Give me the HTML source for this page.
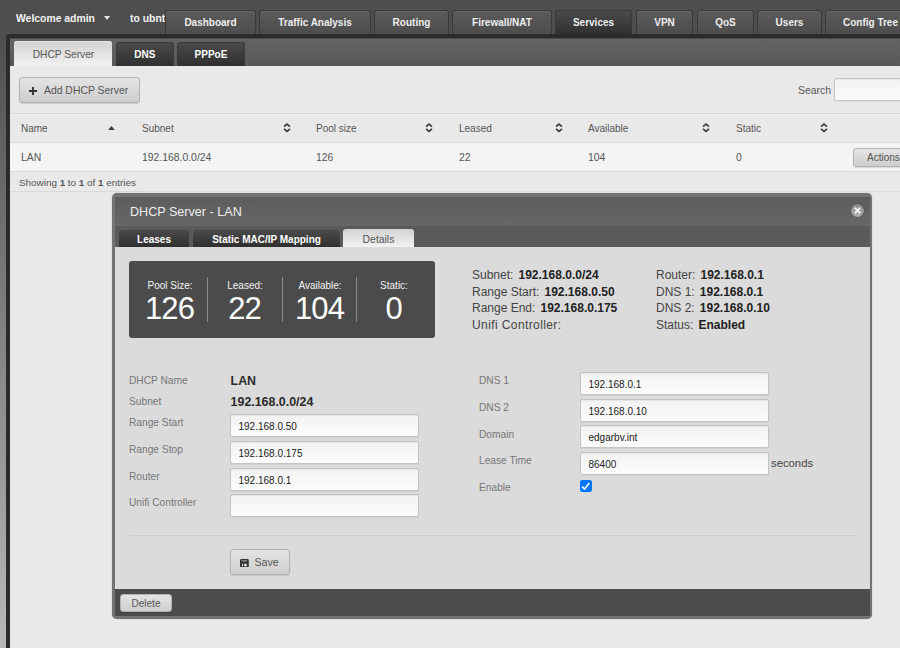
<!DOCTYPE html>
<html><head><meta charset="utf-8">
<style>
*{box-sizing:border-box;margin:0;padding:0}
html,body{width:900px;height:648px;overflow:hidden}
body{background:linear-gradient(#4e4e4e 0px,#4e4e4e 30px,#b8b8b8 648px);font-family:"Liberation Sans",sans-serif;position:relative;color:#555}
.a{position:absolute;white-space:nowrap}
/* header */
#welcome{left:16px;top:12px;font-size:10.4px;font-weight:bold;color:#f2f2f2;line-height:14px}
#caret{left:103.7px;top:16.4px;width:0;height:0;border-left:3.4px solid transparent;border-right:3.4px solid transparent;border-top:4.2px solid #e6e6e6}
#tou{left:130px;top:12px;font-size:10.4px;font-weight:bold;color:#f2f2f2;line-height:14px}
.nt{top:10px;height:25px;border:1px solid #3a3a3a;border-bottom:none;border-radius:3px 3px 0 0;background:linear-gradient(#5b5b5b,#4c4c4c);color:#eee;font-weight:bold;font-size:10px;text-align:center;line-height:23px;box-shadow:inset 0 1px 0 #666}
.nt.act{background:linear-gradient(#4a4a4a,#2f2f2f);box-shadow:none}
/* main frame */
#frame{left:6px;top:34px;width:900px;height:620px;background:#2b2b2b;border-radius:4px 0 0 0}
#tabbar{left:10px;top:38px;width:890px;height:28px;background:linear-gradient(#636363,#595959);border-top:1px solid #4a4a4a;box-shadow:inset 0 1px 0 #666}
.st{top:42px;height:24px;border-radius:3px 3px 0 0;text-align:center;font-size:10.4px;line-height:26px}
.st.on{background:linear-gradient(#d2d2d2,#f2f2f2);color:#555;top:41px;height:25px;line-height:27px;box-shadow:inset 0 1px 0 #eaeaea;font-size:10.2px;text-indent:1px}
.st.off{background:linear-gradient(#4a4a4a,#2f2f2f);color:#fff;font-weight:bold;font-size:10px;border:1px solid #3a3a3a;border-bottom:none;line-height:23px}
#content{left:10px;top:66px;width:890px;height:582px;background:#e9e9e9}
.btn{border:1px solid #b3b3b3;border-radius:3px;background:linear-gradient(#e4e4e4,#cecece);color:#555;font-size:10.4px;text-align:center;box-shadow:0 1px 1px rgba(0,0,0,.12)}
.inp{background:linear-gradient(#f3f3f3,#fbfbfb);border:1px solid #c4c4c4;border-radius:2px;box-shadow:inset 0 1px 1px rgba(0,0,0,.06),0 1px 0 rgba(0,0,0,.05)}
.th{font-size:10px;color:#555;line-height:14px}
.td{font-size:10.4px;color:#555;line-height:14px}
.sort{width:8px;height:10px}
/* modal */
#modal{left:112px;top:193px;width:760px;height:426px;background:#737373;border-radius:5px;box-shadow:0 0 1px rgba(0,0,0,.4)}
#mtitle{left:115px;top:196.5px;width:755px;height:29.5px;background:linear-gradient(#5d5d5d,#676767)}
#mtabs{left:115px;top:226px;width:755px;height:21px;background:#5a5a5a}
.mt{top:230px;height:17px;border-radius:3px 3px 0 0;font-size:10.4px;text-align:center;line-height:19px}
.mt.off{background:linear-gradient(#4b4b4b,#2f2f2f);color:#fff;font-weight:bold;font-size:10px}
.mt.on{top:229px;height:18px;line-height:21px;background:linear-gradient(#d3d3d3,#f2f2f2);color:#555}
#mcontent{left:115px;top:247px;width:755px;height:342px;background:#dbdbdb}
#mfoot{left:115px;top:589px;width:755px;height:27px;background:#4c4c4c}
#stats{left:129px;top:261px;width:306px;height:77px;background:#4b4b4b;border-radius:3px}
.sl{font-size:10px;color:#f4f4f4;text-align:center;width:75px;line-height:12px}
.sv{font-size:31px;color:#fff;text-align:center;width:75px;line-height:30px;letter-spacing:-0.9px;text-indent:-0.9px}
.sep{width:1px;background:#8a8a8a;top:277px;height:45px}
.info{font-size:12px;color:#444;line-height:16.4px}
.info b{color:#222;margin-left:1.8px}
.fl{font-size:10.2px;color:#777;line-height:14px}
.fv{font-size:12.4px;color:#2a2a2a;font-weight:bold;line-height:15px}
.it{font-size:10px;color:#222;line-height:14px}
</style></head><body>
<div class="a" id="welcome">Welcome admin</div>
<div class="a" id="caret"></div>
<div class="a" id="tou">to ubnt</div>

<div class="a nt" style="left:165px;width:91px">Dashboard</div>
<div class="a nt" style="left:259px;width:112px">Traffic Analysis</div>
<div class="a nt" style="left:374px;width:75px">Routing</div>
<div class="a nt" style="left:452px;width:100px">Firewall/NAT</div>
<div class="a nt act" style="left:555px;width:77px">Services</div>
<div class="a nt" style="left:636px;width:57px">VPN</div>
<div class="a nt" style="left:697px;width:57px">QoS</div>
<div class="a nt" style="left:757px;width:65px">Users</div>
<div class="a nt" style="left:825px;width:91px">Config Tree</div>

<div class="a" id="frame"></div>
<div class="a" id="tabbar"></div>
<div class="a st on" style="left:14px;width:98px">DHCP Server</div>
<div class="a st off" style="left:115.5px;width:58.5px">DNS</div>
<div class="a st off" style="left:177px;width:68px">PPPoE</div>
<div class="a" id="content"></div>

<div class="a btn" style="left:19px;top:77px;width:121px;height:26px;line-height:26px;text-align:left;padding-left:10px"><svg style="position:absolute;left:9px;top:9px" width="8" height="8" viewBox="0 0 8 8"><path d="M0 4H8M4 0V8" stroke="#333" stroke-width="1.9"/></svg><span style="margin-left:14px">Add DHCP Server</span></div>
<div class="a td" style="left:798px;top:84px">Search</div>
<div class="a inp" style="left:834px;top:78px;width:80px;height:23px"></div>

<!-- table -->
<div class="a" style="left:10px;top:113px;width:890px;height:1px;background:#d6d6d6"></div>
<div class="a" style="left:10px;top:114px;width:890px;height:28px;background:#e9e9e9"></div>
<div class="a" style="left:10px;top:114px;width:890px;height:1px;background:#f1f1f1"></div>
<div class="a" style="left:10px;top:142px;width:890px;height:1px;background:#d9d9d9"></div>
<div class="a" style="left:10px;top:143px;width:890px;height:28px;background:#f4f4f4"></div>
<div class="a" style="left:10px;top:171px;width:890px;height:1px;background:#d9d9d9"></div>
<div class="a" style="left:10px;top:191px;width:890px;height:1px;background:#d9d9d9"></div>

<div class="a th" style="left:21px;top:122px">Name</div>
<div class="a th" style="left:142px;top:122px">Subnet</div>
<div class="a th" style="left:316px;top:122px">Pool size</div>
<div class="a th" style="left:459px;top:122px">Leased</div>
<div class="a th" style="left:588px;top:122px">Available</div>
<div class="a th" style="left:736px;top:122px">Static</div>
<svg class="a" style="left:108.2px;top:125.8px" width="7" height="4.2" viewBox="0 0 7 4.2"><path d="M0 4.2 L3.5 0 L7 4.2Z" fill="#3a3a3a"/></svg>

<svg class="a sort" style="left:283.0px;top:123.3px" width="8" height="10" viewBox="0 0 8 10"><path d="M1 3.6 L4 1.1 L7 3.6 M1 5.9 L4 8.4 L7 5.9" stroke="#3a3a3a" stroke-width="1.6" fill="none"/></svg>
<svg class="a sort" style="left:425.3px;top:123.3px" width="8" height="10" viewBox="0 0 8 10"><path d="M1 3.6 L4 1.1 L7 3.6 M1 5.9 L4 8.4 L7 5.9" stroke="#3a3a3a" stroke-width="1.6" fill="none"/></svg>
<svg class="a sort" style="left:555.0px;top:123.3px" width="8" height="10" viewBox="0 0 8 10"><path d="M1 3.6 L4 1.1 L7 3.6 M1 5.9 L4 8.4 L7 5.9" stroke="#3a3a3a" stroke-width="1.6" fill="none"/></svg>
<svg class="a sort" style="left:702.2px;top:123.3px" width="8" height="10" viewBox="0 0 8 10"><path d="M1 3.6 L4 1.1 L7 3.6 M1 5.9 L4 8.4 L7 5.9" stroke="#3a3a3a" stroke-width="1.6" fill="none"/></svg>
<svg class="a sort" style="left:820.0px;top:123.3px" width="8" height="10" viewBox="0 0 8 10"><path d="M1 3.6 L4 1.1 L7 3.6 M1 5.9 L4 8.4 L7 5.9" stroke="#3a3a3a" stroke-width="1.6" fill="none"/></svg>
<div class="a td" style="left:21px;top:151px">LAN</div>
<div class="a td" style="left:142px;top:151px">192.168.0.0/24</div>
<div class="a td" style="left:316px;top:151px">126</div>
<div class="a td" style="left:459px;top:151px">22</div>
<div class="a td" style="left:588px;top:151px">104</div>
<div class="a td" style="left:736px;top:151px">0</div>
<div class="a btn" style="left:853px;top:148px;width:60px;height:19px;line-height:18px;text-align:left;padding-left:13px;font-size:10px">Actions</div>

<div class="a" style="left:19px;top:176px;font-size:9.9px;color:#555;line-height:13px">Showing <b>1</b> to <b>1</b> of <b>1</b> entries</div>

<!-- modal -->
<div class="a" id="modal"></div>
<div class="a" id="mtitle"></div>
<div class="a" style="left:130px;top:203.5px;font-size:12.6px;color:#eee;line-height:17px">DHCP Server - LAN</div>
<svg class="a" style="left:850.1px;top:203.4px" width="15" height="15" viewBox="0 0 15 15"><defs><linearGradient id="cg" x1="0" y1="0" x2="0" y2="1"><stop offset="0" stop-color="#8c8c8c"/><stop offset="1" stop-color="#b2b2b2"/></linearGradient></defs><circle cx="7.5" cy="7.5" r="7.2" fill="rgba(0,0,0,.12)"/><circle cx="7.5" cy="7.5" r="6.4" fill="url(#cg)"/><path d="M4.9 4.9 L10.1 10.1 M10.1 4.9 L4.9 10.1" stroke="#fff" stroke-width="1.7"/></svg>
<div class="a" id="mtabs"></div>
<div class="a mt off" style="left:119px;width:70px">Leases</div>
<div class="a mt off" style="left:193px;width:147px">Static MAC/IP Mapping</div>
<div class="a mt on" style="left:343px;width:71px">Details</div>
<div class="a" id="mcontent"></div>
<div class="a" id="mfoot"></div>

<div class="a" id="stats"></div>
<div class="a sl" style="left:132.5px;top:280px">Pool Size:</div>
<div class="a sl" style="left:207.5px;top:280px">Leased:</div>
<div class="a sl" style="left:282.5px;top:280px">Available:</div>
<div class="a sl" style="left:356.5px;top:280px">Static:</div>
<div class="a sv" style="left:132.5px;top:294px">126</div>
<div class="a sv" style="left:207.5px;top:294px">22</div>
<div class="a sv" style="left:282.5px;top:294px">104</div>
<div class="a sv" style="left:356.5px;top:294px">0</div>
<div class="a sep" style="left:207px"></div>
<div class="a sep" style="left:282px"></div>
<div class="a sep" style="left:356px"></div>

<div class="a info" style="left:472px;top:267.3px">Subnet: <b>192.168.0.0/24</b><br>Range Start: <b>192.168.0.50</b><br>Range End: <b>192.168.0.175</b><br><span style="letter-spacing:0.4px">Unifi Controller:</span></div>
<div class="a info" style="left:656px;top:267.3px">Router: <b>192.168.0.1</b><br>DNS 1: <b>192.168.0.1</b><br>DNS 2: <b>192.168.0.10</b><br>Status: <b>Enabled</b></div>

<div class="a fl" style="left:129px;top:374px">DHCP Name</div>
<div class="a fl" style="left:129px;top:395px">Subnet</div>
<div class="a fl" style="left:129px;top:416px">Range Start</div>
<div class="a fl" style="left:129px;top:443px">Range Stop</div>
<div class="a fl" style="left:129px;top:469.5px">Router</div>
<div class="a fl" style="left:129px;top:496px">Unifi Controller</div>
<div class="a fv" style="left:230.6px;top:373.7px">LAN</div>
<div class="a fv" style="left:230.6px;top:394.7px">192.168.0.0/24</div>
<div class="a inp" style="left:230px;top:414px;width:189px;height:23px"></div>
<div class="a inp" style="left:230px;top:441px;width:189px;height:23px"></div>
<div class="a inp" style="left:230px;top:468px;width:189px;height:23px"></div>
<div class="a inp" style="left:230px;top:494px;width:189px;height:23px"></div>
<div class="a it" style="left:238.5px;top:419.6px">192.168.0.50</div>
<div class="a it" style="left:238.5px;top:446.6px">192.168.0.175</div>
<div class="a it" style="left:238.5px;top:473.6px">192.168.0.1</div>

<div class="a fl" style="left:479px;top:374px">DNS 1</div>
<div class="a fl" style="left:479px;top:401px">DNS 2</div>
<div class="a fl" style="left:479px;top:428px">Domain</div>
<div class="a fl" style="left:479px;top:454px">Lease Time</div>
<div class="a fl" style="left:479px;top:481px">Enable</div>
<div class="a inp" style="left:580px;top:372px;width:189px;height:23px"></div>
<div class="a inp" style="left:580px;top:399px;width:189px;height:23px"></div>
<div class="a inp" style="left:580px;top:425px;width:189px;height:23px"></div>
<div class="a inp" style="left:580px;top:452px;width:189px;height:23px"></div>
<div class="a it" style="left:588.5px;top:377.6px">192.168.0.1</div>
<div class="a it" style="left:588.5px;top:404.6px">192.168.0.10</div>
<div class="a it" style="left:588.5px;top:430.6px">edgarbv.int</div>
<div class="a it" style="left:588.5px;top:457.6px">86400</div>
<div class="a" style="left:771px;top:456px;font-size:11.3px;color:#444;line-height:14px">seconds</div>
<svg class="a" style="left:580px;top:480.2px" width="12" height="12" viewBox="0 0 12 12"><rect x="0" y="0" width="12" height="12" rx="2.2" fill="#0075ff"/><path d="M2.1 6.7 L4.6 9 L9.3 3" stroke="#fff" stroke-width="1.7" fill="none"/></svg>

<div class="a" style="left:129px;top:535px;width:727px;height:1px;background:#cdcdcd"></div>

<div class="a btn" style="left:230px;top:549px;width:60px;height:26px;line-height:24px;text-align:left;padding-left:23.5px;font-size:10.6px">Save</div>
<svg class="a" style="left:240px;top:558.5px" width="9" height="8" viewBox="0 0 9 8"><rect x="0" y="0" width="8.8" height="8.2" rx="1.3" fill="#333"/><rect x="1.8" y="1.1" width="5.2" height="1.4" fill="#8a8a8a"/><rect x="1.9" y="4.8" width="1.1" height="2.6" fill="#d8d8d8"/><rect x="4.2" y="4.8" width="2.5" height="2.5" fill="#e8e8e8"/></svg>

<div class="a btn" style="left:120px;top:594px;width:52px;height:18px;line-height:18px;font-size:10px">Delete</div>
</body></html>
